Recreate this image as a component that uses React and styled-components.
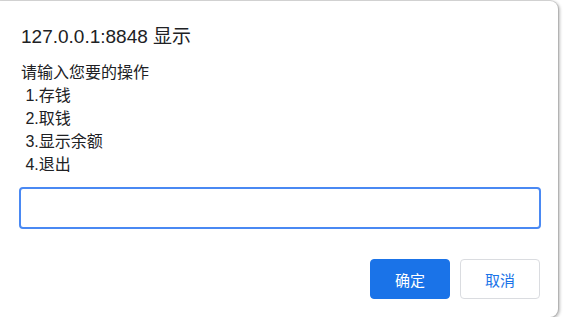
import React from "react";
import styled, { createGlobalStyle } from "styled-components";

const GlobalStyle = createGlobalStyle`
	html, body {
		margin: 0;
		padding: 0;
		background: #ffffff;
		overflow: hidden;
	}
	body {
		font-family: "Liberation Sans", "Noto Sans CJK SC", sans-serif;
		color: #202124;
	}
`;

const Dialog = styled.div`
	box-sizing: border-box;
	width: 566px;
	height: 316px;
	margin: 1px 0 0 -8px;
	padding: 24px 18px 18px 29px;
	background: #ffffff;
	border-radius: 8px;
	box-shadow: 0 0 0 1px rgba(0, 0, 0, 0.1), 1px 1px 3px 1px rgba(0, 0, 0, 0.25);
	display: flex;
	flex-direction: column;
`;

const Title = styled.div`
	font-size: 19px;
	line-height: 24px;
	color: #202124;
`;

const Message = styled.div`
	margin-top: 12px;
	font-size: 16px;
	line-height: 23px;
	white-space: pre-wrap;
	color: #202124;
`;

const Input = styled.input`
	box-sizing: border-box;
	margin: 11px 0 0 -2px;
	width: 522px;
	height: 42px;
	border: 2px solid #4a89f3;
	border-radius: 4px;
	outline: none;
	padding: 0 8px;
	font-size: 15px;
	font-family: inherit;
`;

const Actions = styled.div`
	margin-top: 30px;
	display: flex;
	justify-content: flex-end;
	gap: 10px;
`;

const Button = styled.button`
	box-sizing: border-box;
	width: 80px;
	height: 40px;
	border-radius: 4px;
	font-family: inherit;
	font-size: 15px;
	cursor: pointer;
	border: 1px solid ${(p) => (p.$primary ? "#1a73e8" : "#dadce0")};
	background: ${(p) => (p.$primary ? "#1a73e8" : "#ffffff")};
	color: ${(p) => (p.$primary ? "#ffffff" : "#1a73e8")};
`;

const message = "请输入您要的操作\n 1.存钱\n 2.取钱\n 3.显示余额\n 4.退出";

export default function App() {
	return (
		<>
			<GlobalStyle />
			<Dialog>
				<Title>127.0.0.1:8848 显示</Title>
				<Message>{message}</Message>
				<Input autoFocus />
				<Actions>
					<Button $primary>确定</Button>
					<Button>取消</Button>
				</Actions>
			</Dialog>
		</>
	);
}
